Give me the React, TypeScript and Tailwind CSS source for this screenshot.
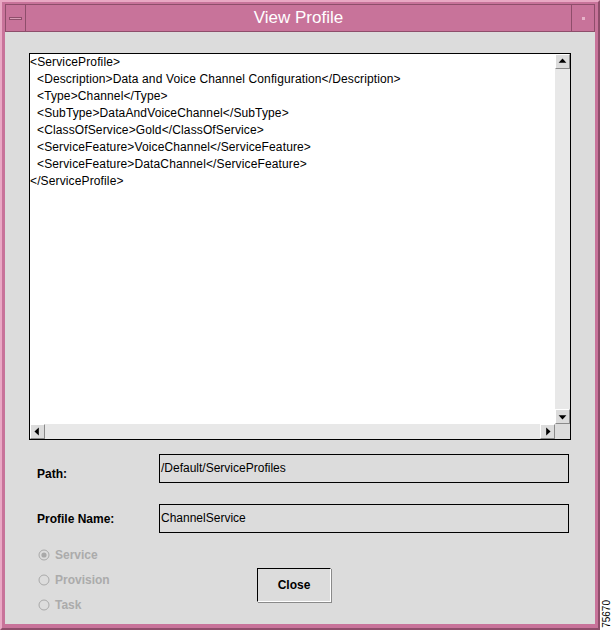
import React from "react";

const lines = [
  { t: "<ServiceProfile>", i: false },
  { t: "<Description>Data and Voice Channel Configuration</Description>", i: true },
  { t: "<Type>Channel</Type>", i: true },
  { t: "<SubType>DataAndVoiceChannel</SubType>", i: true },
  { t: "<ClassOfService>Gold</ClassOfService>", i: true },
  { t: "<ServiceFeature>VoiceChannel</ServiceFeature>", i: true },
  { t: "<ServiceFeature>DataChannel</ServiceFeature>", i: true },
  { t: "</ServiceProfile>", i: false },
];

function ArrowBtn({ dir }: { dir: "up" | "down" | "left" | "right" }) {
  const paths: Record<string, string> = {
    up: "M3 9 L7.5 4 L12 9 Z",
    down: "M3 6 L7.5 11 L12 6 Z",
    left: "M9 3 L4 7.5 L9 12 Z",
    right: "M6 3 L11 7.5 L6 12 Z",
  };
  return (
    <div className="w-[15px] h-[15px] shrink-0 bg-[#dcdcdc] border-t border-l border-t-white border-l-white border-b border-r border-b-[#8a8a8a] border-r-[#8a8a8a] flex items-center justify-center">
      <svg width="15" height="15" viewBox="0 0 15 15">
        <path d={paths[dir]} fill="#000" />
      </svg>
    </div>
  );
}

function Radio({ checked, label }: { checked?: boolean; label: string }) {
  return (
    <div className="flex items-center h-[25px] gap-[5px]">
      <svg width="12" height="12" viewBox="0 0 12 12">
        <circle cx="6" cy="6" r="5" fill="none" stroke="#a9a9a9" strokeWidth="1" />
        {checked && <circle cx="6" cy="6" r="2.6" fill="#a9a9a9" />}
      </svg>
      <span className="text-[12px] font-bold text-[#ababab]">{label}</span>
    </div>
  );
}

export default function App() {
  return (
    <div
      className="w-[613px] h-[630px] bg-white flex"
      style={{ fontFamily: '"Liberation Sans", Arial, sans-serif' }}
    >
      <div className="w-[600px] h-[630px] bg-[#c8739a] border-l-[2px] border-t-[2px] border-l-[#e9a8c4] border-t-[#e9a8c4] border-r-[2px] border-r-[#8e4e6b] border-b-[2px] border-b-[#8e4e6b] px-[3px] pt-[2px] pb-[4px] flex flex-col">
        <div className="h-[28px] flex shrink-0">
          <div className="w-[21px] h-[28px] border border-[#8e4e6b] flex items-center justify-center">
            <div className="w-[13px] h-[3px] bg-[#d99bb5] border border-[#8e4e6b]" />
          </div>
          <div className="flex-1 h-[28px] border-t border-b border-[#8e4e6b] flex items-center justify-center text-white text-[17px]">
            View Profile
          </div>
          <div className="w-[24px] h-[28px] border border-[#8e4e6b] flex items-center justify-center">
            <div className="w-[3px] h-[3px] bg-[#e6b3c9]" />
          </div>
        </div>
        <div className="flex-1 bg-[#dcdcdc] flex flex-col pl-[24px] pr-[25px] pt-[21px]">
          <div className="w-[542px] h-[387px] border border-black bg-white flex flex-col">
            <div className="flex flex-1 min-h-0">
              <div className="flex-1 text-[12px] tracking-[0.13px] leading-[17px] text-black whitespace-pre overflow-hidden">
                {lines.map((l, k) => (
                  <div key={k} className={l.i ? "pl-[7px]" : ""}>
                    {l.t}
                  </div>
                ))}
              </div>
              <div className="w-[15px] bg-[#e8e8e8] flex flex-col justify-between">
                <ArrowBtn dir="up" />
                <ArrowBtn dir="down" />
              </div>
            </div>
            <div className="h-[15px] flex">
              <div className="flex-1 bg-[#e8e8e8] flex justify-between">
                <ArrowBtn dir="left" />
                <ArrowBtn dir="right" />
              </div>
              <div className="w-[15px] bg-[#dcdcdc]" />
            </div>
          </div>

          <div className="flex items-center mt-[14px] h-[29px]">
            <div className="w-[130px] pl-[8px] pt-[10px] text-[12px] font-bold text-black">Path:</div>
            <div className="w-[410px] h-[29px] border border-black text-[12px] text-black pl-[1px] pt-[6px] pb-[9px] leading-[14px]">
              /Default/ServiceProfiles
            </div>
          </div>

          <div className="flex items-center mt-[21px] h-[29px]">
            <div className="w-[130px] pl-[8px] pt-[1px] text-[12px] font-bold text-black">Profile Name:</div>
            <div className="w-[410px] h-[29px] border border-black text-[12px] text-black pl-[1px] pb-[2px] flex items-center">
              ChannelService
            </div>
          </div>

          <div className="flex mt-[9px]">
            <div className="flex flex-col pl-[9px] w-[228px]">
              <Radio checked label="Service" />
              <Radio label="Provision" />
              <Radio label="Task" />
            </div>
            <div className="pt-[26px]">
              <div className="w-[74px] h-[34px] border border-black border-r-white border-b-white shadow-[1px_1px_0_#8a8a8a] flex items-center justify-center text-[12px] font-bold text-black">
                Close
              </div>
            </div>
          </div>
        </div>
      </div>
      <div className="flex-1 flex items-end justify-center pb-[2px]">
        <div className="text-[10px] text-black [writing-mode:vertical-rl] rotate-180 leading-[12px]">75670</div>
      </div>
    </div>
  );
}
